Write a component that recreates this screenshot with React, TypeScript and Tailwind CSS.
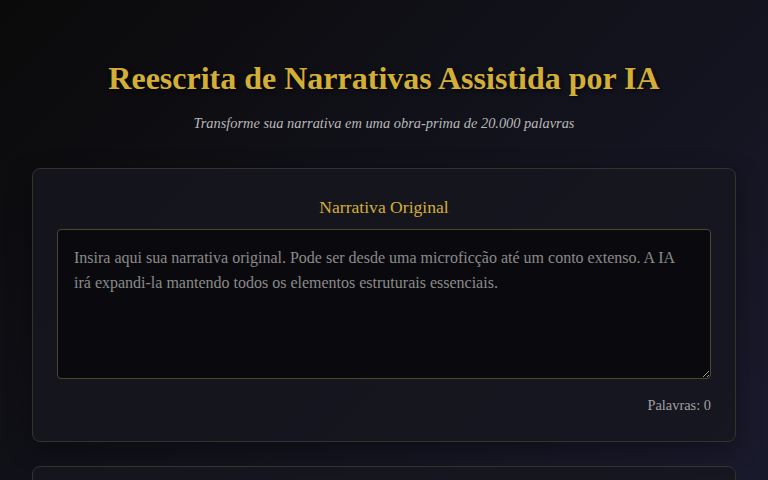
import React, { useState } from 'react';

export default function App() {
  const [text, setText] = useState('');
  const words = text.trim() ? text.trim().split(/\s+/).length : 0;

  return (
    <div className="min-h-screen bg-[linear-gradient(135deg,#0a0a0a_0%,#1c1c32_100%)] font-['Liberation_Serif',serif] text-gray-200">
      <div className="px-8 pt-[58px] pb-10">
        <h1 className="text-center text-[32px] leading-[40px] font-bold text-[#d4af37] [text-shadow:2px_2px_4px_rgba(0,0,0,0.6)]">
          Reescrita de Narrativas Assistida por IA
        </h1>
        <p className="mt-[15px] text-center text-[14.4px] italic text-[#b8b8b8]">
          Transforme sua narrativa em uma obra-prima de 20.000 palavras
        </p>

        <div className="mt-[33px] rounded-lg border border-[#34322c] bg-[#16161f]/80 px-6 pt-[25px] pb-[24px] shadow-[0_8px_24px_rgba(0,0,0,0.35)]">
          <label className="block text-center text-[17.6px] text-[#d4af37]">Narrativa Original</label>
          <textarea
            value={text}
            onChange={(e) => setText(e.target.value)}
            placeholder="Insira aqui sua narrativa original. Pode ser desde uma microficção até um conto extenso. A IA irá expandi-la mantendo todos os elementos estruturais essenciais."
            className="mt-[9px] block h-[150px] w-full resize-y rounded border border-[#4d4630] bg-[#0a0a0e] px-4 py-[15px] text-[16px] leading-[25px] text-gray-200 placeholder:text-[#8a8a8a] focus:outline-none"
          />
          <div className="mt-4 text-right text-[14.4px] text-[#a0a0a0]">Palavras: {words}</div>
        </div>

        <div className="mt-6 h-40 rounded-lg border border-[#34322c] bg-[#16161f]/80" />
      </div>
    </div>
  );
}
